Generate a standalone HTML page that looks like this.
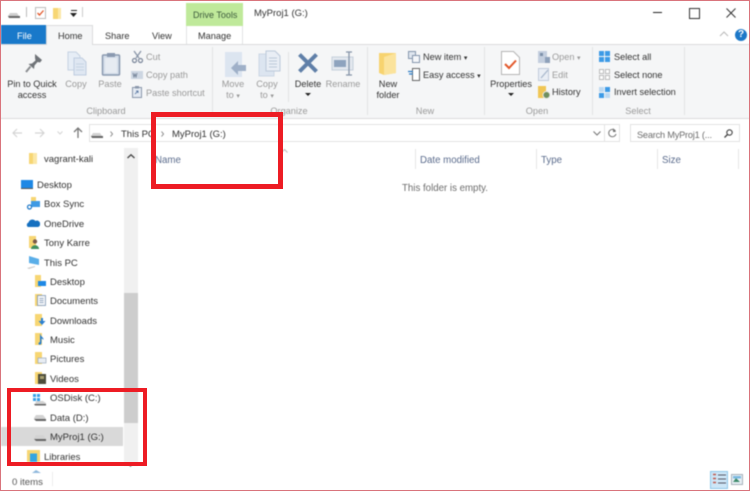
<!DOCTYPE html>
<html><head><meta charset="utf-8">
<style>
html,body{margin:0;padding:0;background:#fff}
#w{position:relative;width:750px;height:491px;overflow:hidden;background:#fff;font-family:"Liberation Sans",sans-serif;font-size:9.2px;color:#333}
#in{position:absolute;inset:0;filter:blur(.5px)}
.t{position:absolute;white-space:nowrap;line-height:12px;height:12px;margin-top:2px}
.g{color:#9a9a9a}
.c{text-align:center;transform:translateX(-50%)}
.b{position:absolute}
svg{position:absolute;overflow:visible}
.s{font-size:9.5px;color:#333}
.h{color:#5a6b8c;font-size:9.7px}
</style></head><body><div id="w"><div id="in">

<!-- ribbon background -->
<div class="b" style="left:0;top:44px;width:750px;height:74px;background:#f5f6f7"></div>
<div class="b" style="left:0;top:44px;width:750px;height:1px;background:#dadbdc"></div>
<div class="b" style="left:0;top:118px;width:750px;height:1px;background:#dadbdc"></div>

<!-- File tab -->
<div class="b" style="left:1px;top:25px;width:45px;height:19px;background:#1979ca"></div>
<div class="t" style="left:17px;top:28px;color:#fff">File</div>
<!-- Home tab -->
<div class="b" style="left:46px;top:25px;width:47px;height:20px;background:#f5f6f7;border:1px solid #dadbdc;border-bottom:0;box-sizing:border-box"></div>
<div class="t" style="left:58px;top:28px">Home</div>
<div class="t" style="left:105px;top:28px">Share</div>
<div class="t" style="left:152px;top:28px">View</div>
<!-- Drive tools -->
<div class="b" style="left:186px;top:3px;width:57px;height:23px;background:#bfe99a"></div>
<div class="t" style="left:193px;top:7px;color:#3c5a3c;font-size:9px">Drive Tools</div>
<div class="b" style="left:186px;top:26px;width:57px;height:18px;background:#fff;border-right:1px solid #e2e3e4;border-left:1px solid #e2e3e4;box-sizing:border-box"></div>
<div class="t" style="left:198px;top:28px">Manage</div>
<div class="t" style="left:254px;top:6px;font-size:9.5px">MyProj1 (G:)</div>

<!-- QAT -->
<svg style="left:8px;top:11px" width="12" height="8"><path d="M2 2h7l2 3v1H0V5z" fill="#cfcfcf"/><path d="M0 5h12v2H1z" fill="#666"/></svg>
<div class="b" style="left:26px;top:7px;width:1px;height:10px;background:#bbb"></div>
<svg style="left:35px;top:7px" width="11" height="12"><rect x=".5" y=".5" width="10" height="11" fill="#fff" stroke="#bdbdbd"/><path d="M2.500 6l2 2 4-4.500" fill="none" stroke="#e2572a" stroke-width="1.300"/></svg>
<svg style="left:53px;top:7px" width="9" height="12"><path d="M0 1h8v11H0z" fill="#f7d673"/><path d="M5 1h3v11H5z" fill="#fbe7a6"/></svg>
<svg style="left:70px;top:10px" width="8" height="8"><rect x="1" y="0" width="6" height="1" fill="#222"/><path d="M0 3h7L3.500 7z" fill="#222"/></svg>
<div class="b" style="left:82px;top:7px;width:1px;height:10px;background:#ccc"></div>

<!-- window controls -->
<div class="b" style="left:653px;top:12px;width:9px;height:1px;background:#222"></div>
<div class="b" style="left:689px;top:8px;width:9px;height:9px;border:1px solid #333"></div>
<svg style="left:726px;top:8px" width="11" height="11"><path d="M.5.500l9 9M9.500.500l-9 9" stroke="#333" stroke-width="1"/></svg>
<svg style="left:719px;top:31px" width="10" height="6"><path d="M1 5l4-4 4 4" fill="none" stroke="#bbb" stroke-width="1.100"/></svg>
<div class="b" style="left:735px;top:29px;width:12px;height:12px;border-radius:50%;background:#1c78c8;color:#fff;font-size:10px;font-weight:bold;line-height:12px;text-align:center">?</div>

<!-- Clipboard -->
<svg style="left:23px;top:54px" width="20" height="20"><path d="M12 0l7 6-2 2.500-2.500-.500-3 3.500-.5 3.500-5.500-5 3.500-.5 3.500-3-.5-2.500z" fill="#6f7378"/><path d="M7.500 12.500L3 18" stroke="#8a8d90" stroke-width="2"/></svg>
<div class="t c" style="left:32px;top:76px;color:#333">Pin to Quick</div>
<div class="t c" style="left:32px;top:87px;color:#333">access</div>
<svg style="left:66px;top:51px" width="22" height="25"><path d="M2 1h8l4 4v14H2z" fill="#e6edf6" stroke="#c5d2e2"/><path d="M8 7h8l4 4v13H8z" fill="#dfe7f2" stroke="#bfcde0"/><path d="M10 13h8M10 16h8M10 19h8" stroke="#c5d2e2"/></svg>
<div class="t c g" style="left:76px;top:76px">Copy</div>
<svg style="left:101px;top:52px" width="20" height="24"><rect x="1.500" y="3" width="17" height="20" rx="1" fill="#d5deea" stroke="#8a99b0" stroke-width="1.500"/><rect x="4" y="6" width="12" height="15" fill="#e6ebf2"/><rect x="6" y="1" width="8" height="4" fill="#8a99b0"/></svg>
<div class="t c g" style="left:110px;top:76px">Paste</div>

<svg style="left:132px;top:51px" width="11" height="12"><path d="M2 0l5 7M9 0L4 7" stroke="#8a96a8" stroke-width="1.300"/><circle cx="2.500" cy="9.500" r="2" fill="none" stroke="#7a869a" stroke-width="1.200"/><circle cx="8.500" cy="9.500" r="2" fill="none" stroke="#7a869a" stroke-width="1.200"/></svg>
<div class="t g" style="left:146px;top:49px">Cut</div>
<svg style="left:131px;top:71px" width="12" height="8"><rect width="12" height="8" fill="#cdd6e2"/><path d="M2 2l1 4 1-3 1 3 1-4" stroke="#6c7c92" fill="none" stroke-width=".8"/></svg>
<div class="t g" style="left:146px;top:67px">Copy path</div>
<svg style="left:132px;top:86px" width="10" height="12"><rect x=".5" y="1.500" width="9" height="10" fill="#e4eaf2" stroke="#8a97ab"/><rect x="3" y="0" width="4" height="2.500" fill="#8a97ab"/><path d="M3 8l3-3M4 5h2v2" stroke="#4d6d9c" fill="none" stroke-width=".8"/></svg>
<div class="t g" style="left:146px;top:85px">Paste shortcut</div>
<div class="t c g" style="left:106px;top:103px">Clipboard</div>
<div class="b" style="left:212px;top:47px;width:1px;height:68px;background:#e2e3e4"></div>

<!-- Organize -->
<svg style="left:224px;top:51px" width="23" height="27"><path d="M1 1h17v25H1z" fill="#dce5f0"/><path d="M22 14h-8v-4l-7 7 7 7v-4h8z" fill="#9fb0c8"/></svg>
<div class="t c g" style="left:233px;top:76px">Move</div>
<div class="t c g" style="left:233px;top:87px">to <span style="font-size:7px">▾</span></div>
<svg style="left:258px;top:50px" width="24" height="26"><path d="M1 4h15v22H1z" fill="#dce5f0" stroke="#ccd7e5"/><path d="M8 1h9l5 5v15H8z" fill="#e9eef5" stroke="#bcc9da"/><path d="M11 8h8M11 11h8M11 14h8M11 17h8" stroke="#bcc9da"/></svg>
<div class="t c g" style="left:267px;top:76px">Copy</div>
<div class="t c g" style="left:267px;top:87px">to <span style="font-size:7px">▾</span></div>
<div class="b" style="left:288px;top:52px;width:1px;height:50px;background:#e2e3e4"></div>
<svg style="left:298px;top:53px" width="20" height="20"><path d="M1.500 1.500l17 17M18.500 1.500l-17 17" stroke="#5f7fa8" stroke-width="4"/></svg>
<div class="t c" style="left:308px;top:76px">Delete</div>
<svg style="left:305px;top:93px" width="6" height="4"><path d="M0 0h6L3 3z" fill="#222"/></svg>
<svg style="left:331px;top:51px" width="24" height="25"><rect x="1" y="6" width="21" height="13" fill="#e3e8ef" stroke="#c6cfdb"/><rect x="3" y="9" width="12" height="7" fill="#8ea3be"/><path d="M18 1v23M15 1h6M15 24h6" stroke="#8594a8" stroke-width="1.300" fill="none"/></svg>
<div class="t c g" style="left:343px;top:76px">Rename</div>
<div class="t c g" style="left:289px;top:103px">Organize</div>
<div class="b" style="left:367px;top:47px;width:1px;height:68px;background:#e2e3e4"></div>

<!-- New -->
<svg style="left:378px;top:52px" width="20" height="24"><path d="M1 1h17v20l-12 2-5-2z" fill="#f7d36f"/><path d="M6 5l12-4v20l-12 2z" fill="#fbe39c"/></svg>
<div class="t c" style="left:388px;top:76px">New</div>
<div class="t c" style="left:388px;top:87px">folder</div>
<svg style="left:408px;top:51px" width="12" height="12"><rect x=".5" y=".5" width="7" height="7" fill="#dfe6ef" stroke="#8596ad"/><rect x="4.500" y="4.500" width="7" height="7" fill="#f4f6f9" stroke="#8596ad"/></svg>
<div class="t" style="left:423px;top:49px">New item <span style="font-size:7px">▾</span></div>
<svg style="left:408px;top:68px" width="12" height="13"><path d="M4.500.500h7v12h-7z" fill="#fff" stroke="#666"/><path d="M0 3.500h5M1 6h4" stroke="#2e7cc4" stroke-width="1.300"/></svg>
<div class="t" style="left:423px;top:67px">Easy access <span style="font-size:7px">▾</span></div>
<div class="t c g" style="left:425px;top:103px">New</div>
<div class="b" style="left:484px;top:47px;width:1px;height:68px;background:#e2e3e4"></div>

<!-- Open -->
<svg style="left:501px;top:51px" width="19" height="24"><path d="M.5.500h12l6 6v17H.5z" fill="#fff" stroke="#b5b5b5"/><path d="M4 13l4 4 7-7.500" fill="none" stroke="#e2572a" stroke-width="2"/></svg>
<div class="t c" style="left:511px;top:76px">Properties</div>
<svg style="left:508px;top:93px" width="6" height="4"><path d="M0 0h6L3 3z" fill="#222"/></svg>
<svg style="left:538px;top:51px" width="12" height="12"><rect width="9" height="12" fill="#c3cede"/><rect x="2" y="2" width="3" height="3" fill="#7c90aa"/><path d="M7 6h5v6H7z" fill="#8ea1ba"/></svg>
<div class="t g" style="left:552px;top:49px">Open <span style="font-size:7px">▾</span></div>
<svg style="left:538px;top:68px" width="12" height="13"><rect x=".5" y=".5" width="10" height="12" fill="#e9eef5" stroke="#c0cbdb"/><path d="M3 10l7-8" stroke="#a9b8cc" stroke-width="1.300"/></svg>
<div class="t g" style="left:552px;top:67px">Edit</div>
<svg style="left:538px;top:86px" width="13" height="13"><path d="M0 0h8v12H0z" fill="#f0c655"/><circle cx="8.500" cy="9" r="3.500" fill="#6f8f5f" stroke="#e8e8e8"/></svg>
<div class="t" style="left:552px;top:84px">History</div>
<div class="t c g" style="left:537px;top:103px">Open</div>
<div class="b" style="left:592px;top:47px;width:1px;height:68px;background:#e2e3e4"></div>

<!-- Select -->
<svg style="left:599px;top:51px" width="11" height="11"><path d="M0 0h5v5H0zM6 0h5v5H6zM0 6h5v5H0zM6 6h5v5H6z" fill="#3d9ae6"/></svg>
<div class="t" style="left:614px;top:49px">Select all</div>
<svg style="left:599px;top:69px" width="11" height="11"><path d="M.5.500h4v4h-4zM6.500.500h4v4h-4zM.5 6.500h4v4h-4zM6.500 6.500h4v4h-4z" fill="#fff" stroke="#bbb"/></svg>
<div class="t" style="left:614px;top:67px">Select none</div>
<svg style="left:599px;top:87px" width="11" height="11"><path d="M0 0h5v5H0zM6 6h5v5H6z" fill="#bcd9f2"/><path d="M6 0h5v5H6zM0 6h5v5H0z" fill="#3d9ae6"/></svg>
<div class="t" style="left:614px;top:84px">Invert selection</div>
<div class="t c g" style="left:638px;top:103px">Select</div>
<div class="b" style="left:684px;top:47px;width:1px;height:68px;background:#e2e3e4"></div>

<!-- nav -->
<svg style="left:12px;top:128px" width="10" height="10"><path d="M10 5H1M5 1L1 5l4 4" fill="none" stroke="#d4d4d4" stroke-width="1.200"/></svg>
<svg style="left:35px;top:128px" width="10" height="10"><path d="M0 5h9M5 1l4 4-4 4" fill="none" stroke="#d4d4d4" stroke-width="1.200"/></svg>
<svg style="left:57px;top:131px" width="6" height="4"><path d="M.5.500L3 3 5.500.500" fill="none" stroke="#d4d4d4"/></svg>
<svg style="left:73px;top:127px" width="10" height="11"><path d="M5 11V1M1 5l4-4 4 4" fill="none" stroke="#777" stroke-width="1.300"/></svg>

<!-- address -->
<div class="b" style="left:89px;top:124px;width:531px;height:18px;border:1px solid #e3e3e3;box-sizing:border-box;background:#fff"></div>
<svg style="left:91px;top:131px" width="12" height="8"><path d="M2 2h7l2 3v1H0V5z" fill="#d2d2d2"/><path d="M0 5h12v2H1z" fill="#666"/></svg>
<svg style="left:110px;top:131px" width="4" height="6"><path d="M.5.500L2.500 3 .5 5.500" fill="none" stroke="#888"/></svg>
<div class="t s" style="left:121px;top:127px">This PC</div>
<svg style="left:161px;top:131px" width="4" height="6"><path d="M.5.500L2.500 3 .5 5.500" fill="none" stroke="#888"/></svg>
<div class="t s" style="left:172px;top:127px">MyProj1 (G:)</div>
<svg style="left:593px;top:131px" width="8" height="5"><path d="M.5.500L4 4 7.500.500" fill="none" stroke="#777" stroke-width="1.100"/></svg>
<div class="b" style="left:604px;top:125px;width:1px;height:16px;background:#e3e3e3"></div>
<svg style="left:608px;top:128px" width="9" height="10"><path d="M7.500 3A3.700 3.700 0 1 0 8 6" fill="none" stroke="#777" stroke-width="1"/><path d="M5 0v4h3z" fill="#777"/></svg>
<div class="b" style="left:630px;top:124px;width:110px;height:18px;border:1px solid #e3e3e3;box-sizing:border-box;background:#fff"></div>
<div class="t" style="left:637px;top:127px;color:#6d6d6d;letter-spacing:-.2px">Search MyProj1 (...</div>
<svg style="left:724px;top:129px" width="9" height="9"><circle cx="5.500" cy="3.500" r="2.700" fill="none" stroke="#444" stroke-width="1.100"/><path d="M3.500 5.500L.5 8.500" stroke="#444" stroke-width="1.300"/></svg>

<!-- columns -->
<div class="t h" style="left:155px;top:153px">Name</div>
<div class="t h" style="left:420px;top:153px">Date modified</div>
<div class="t h" style="left:541px;top:153px">Type</div>
<div class="t h" style="left:662px;top:153px">Size</div>
<div class="b" style="left:415px;top:149px;width:1px;height:20px;background:#e5e5e5"></div>
<div class="b" style="left:536px;top:149px;width:1px;height:20px;background:#e5e5e5"></div>
<div class="b" style="left:657px;top:149px;width:1px;height:20px;background:#e5e5e5"></div>
<div class="b" style="left:738px;top:149px;width:1px;height:20px;background:#e5e5e5"></div>
<svg style="left:281px;top:149px" width="7" height="4"><path d="M.5 3.500L3.500.500l3 3" fill="none" stroke="#bbb"/></svg>
<div class="t" style="left:402px;top:181px;color:#6d6d6d;font-size:9.7px">This folder is empty.</div>

<!-- nav pane -->
<div class="b" style="left:1px;top:427px;width:122px;height:19px;background:#d9d9d9"></div>
<div class="b" style="left:124px;top:148px;width:14px;height:318px;background:#f0f0f0"></div>
<div class="b" style="left:124px;top:293px;width:14px;height:130px;background:#cdcdcd"></div>
<svg style="left:127px;top:154px" width="8" height="5"><path d="M.5 4L4 .800 7.500 4" fill="none" stroke="#444" stroke-width="1.300"/></svg>

<div class="t s" style="left:44px;top:152px">vagrant-kali</div>
<div class="t s" style="left:37px;top:178px">Desktop</div>
<div class="t s" style="left:44px;top:197px">Box Sync</div>
<div class="t s" style="left:44px;top:217px">OneDrive</div>
<div class="t s" style="left:44px;top:236px">Tony Karre</div>
<div class="t s" style="left:44px;top:256px">This PC</div>
<div class="t s" style="left:50px;top:275px">Desktop</div>
<div class="t s" style="left:50px;top:294px">Documents</div>
<div class="t s" style="left:50px;top:314px">Downloads</div>
<div class="t s" style="left:50px;top:333px">Music</div>
<div class="t s" style="left:50px;top:352px">Pictures</div>
<div class="t s" style="left:50px;top:372px">Videos</div>
<div class="t s" style="left:50px;top:391px">OSDisk (C:)</div>
<div class="t s" style="left:50px;top:411px">Data (D:)</div>
<div class="t s" style="left:50px;top:430px">MyProj1 (G:)</div>
<div class="t s" style="left:44px;top:450px">Libraries</div>

<!-- nav icons -->
<svg style="left:29px;top:153px" width="8" height="11"><rect width="8" height="11" fill="#f7d673"/><rect x="4" width="4" height="11" fill="#fbe7a6"/></svg>
<svg style="left:21px;top:180px" width="12" height="9"><rect width="12" height="8" fill="#1e88e5"/><rect y="8" width="12" height="1" fill="#555"/></svg>
<svg style="left:27px;top:197px" width="13" height="13"><path d="M4 0h5v5H4z" fill="#f7d673"/><rect x="4" y="4" width="9" height="6" fill="#3f9ae4"/><circle cx="2.500" cy="10" r="2" fill="none" stroke="#1e78c8" stroke-width="1.200"/></svg>
<svg style="left:26px;top:219px" width="14" height="8"><path d="M2 8a2.500 2.500 0 0 1 .5-4.500A4 4 0 0 1 9.500 2 3 3 0 0 1 14 5a2.500 2.500 0 0 1-2 3z" fill="#1570c0"/></svg>
<svg style="left:29px;top:236px" width="10" height="13"><rect width="7" height="12" fill="#f7d673"/><circle cx="6" cy="5.500" r="2.200" fill="#7a5a4a"/><path d="M2 13c0-5 8-5 8 0z" fill="#3f8f5f"/></svg>
<svg style="left:27px;top:256px" width="14" height="13"><path d="M2 0l10 3v6L2 7z" fill="#5aaee8"/><path d="M0 12l8-2v1l-6 2z" fill="#ccc"/></svg>
<svg style="left:35px;top:275px" width="11" height="12"><path d="M0 0h6v12H0z" fill="#f7d673"/><rect x="3" y="6" width="8" height="5" fill="#1e88e5"/></svg>
<svg style="left:35px;top:294px" width="11" height="12"><path d="M0 0h7v12H0z" fill="#f7d673"/><rect x="2.500" y="1.500" width="8" height="10" fill="#f4f6f9" stroke="#7f96b5" stroke-width=".8"/><path d="M4.500 4.500h4M4.500 6.500h4M4.500 8.500h4" stroke="#7f96b5" stroke-width=".7"/></svg>
<svg style="left:35px;top:314px" width="11" height="12"><path d="M0 0h7v12H0z" fill="#f7d673"/><path d="M6 4v3H3.500l3.500 4 3.500-4H8V4z" fill="#2a7fd0"/></svg>
<svg style="left:35px;top:333px" width="11" height="12"><path d="M0 0h7v12H0z" fill="#f7d673"/><path d="M5 1l.5 0c0 3 3.500 3 3 6-.5-1-1.500-1.500-2-1.500V10c0 2-3 2.500-3 .5 0-1 1-1.500 1.500-1.500z" fill="#2a7fd0"/></svg>
<svg style="left:35px;top:352px" width="11" height="12"><path d="M0 0h7v12H0z" fill="#f7d673"/><rect x="3" y="6" width="8" height="5" fill="#e8edf3" stroke="#9aa8bb" stroke-width=".7"/></svg>
<svg style="left:35px;top:372px" width="11" height="12"><path d="M0 0h7v12H0z" fill="#f7d673"/><rect x="3" y="2" width="8" height="10" fill="#4d4d3c"/><rect x="5" y="4" width="4" height="3" fill="#a8a070"/></svg>
<svg style="left:33px;top:393px" width="14" height="13"><path d="M0 1h3v3H0zM4 1h3v3H4zM0 5h3v3H0zM4 5h3v3H4z" fill="#38a0e8"/><path d="M3 8h7l3 2v2H2z" fill="#d2d2d2"/><path d="M1 11h12v1.500H2z" fill="#666"/></svg>
<svg style="left:34px;top:414px" width="12" height="8"><path d="M2 1h7l2.500 3v1H0V4z" fill="#d2d2d2"/><path d="M0 5h12v2H2z" fill="#666"/></svg>
<svg style="left:34px;top:434px" width="12" height="8"><path d="M2 1h7l2.500 3v1H0V4z" fill="#d2d2d2"/><path d="M0 5h12v2H2z" fill="#666"/></svg>
<svg style="left:27px;top:450px" width="13" height="12"><path d="M0 0h13v12H0z" fill="#f7d673"/><rect x="3" y="3.500" width="7" height="8.500" fill="#35a5e0"/></svg>
<svg style="left:32px;top:470px" width="9" height="3"><path d="M0 3l4-3 5 3z" fill="#8fb8dc"/></svg>
<svg style="left:128px;top:464px" width="6" height="3"><path d="M0 0h5L2.500 3z" fill="#666"/></svg>

<!-- status -->
<div class="t" style="left:12px;top:475px;color:#555;font-size:9.6px">0 items</div>
<div class="b" style="left:52px;top:472px;width:1px;height:14px;background:#ececec"></div>
<div class="b" style="left:710px;top:471px;width:18px;height:18px;background:#cde6f7;border:1px solid #8fc7ea;box-sizing:border-box"></div>
<svg style="left:713px;top:474px" width="13" height="12"><path d="M0 .500h3M0 4.500h3M0 8.500h3" stroke="#c0564a" stroke-width="1.500"/><path d="M5 1h8M5 5h8M5 9h8" stroke="#556" stroke-width="1"/></svg>
<svg style="left:731px;top:474px" width="12" height="11"><rect x=".5" y=".5" width="11" height="10" fill="#e8f0f6" stroke="#a5b0ba"/><path d="M2 8l3-4 4 4z" fill="#3d8a6a"/><rect x="2" y="2" width="8" height="2.500" fill="#7ab8e0"/></svg>

</div>
<!-- red annotation boxes (sharp, outside blur) -->
<div class="b" style="left:151px;top:112px;width:132px;height:77px;border:5px solid #ed1c24;box-sizing:border-box"></div>
<div class="b" style="left:7px;top:388px;width:140px;height:78px;border:4px solid #ed1c24;box-sizing:border-box"></div>
<!-- window border -->
<div class="b" style="left:0;top:0;width:750px;height:491px;border:1px solid #d9747c;box-sizing:border-box"></div>
</div></body></html>
